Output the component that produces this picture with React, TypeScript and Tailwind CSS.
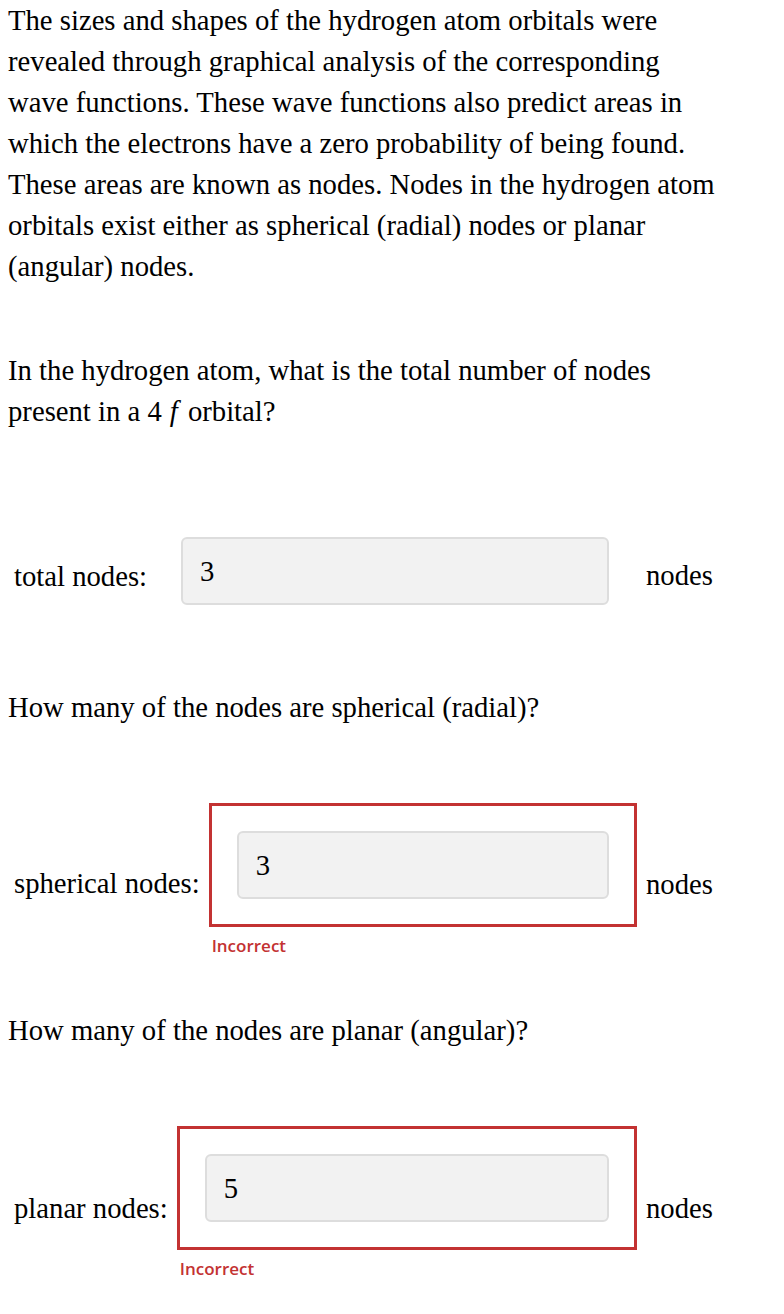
import React from "react";

function Field({
  label,
  value,
  labelGap,
  labelTop,
  unitTop,
  incorrect,
}: {
  label: string;
  value: string;
  labelGap: string;
  labelTop: string;
  unitTop: string;
  incorrect: boolean;
}) {
  return (
    <div className="flex items-start pl-[6px]">
      <div className="flex w-[623px] items-start">
        <span className={`whitespace-nowrap ${labelTop}`}>{label}</span>
        <div className={`flex-1 ${labelGap}`}>
          <div
            className={`border-[3px] p-[25px] ${
              incorrect ? "border-[#c33232]" : "border-transparent"
            }`}
          >
            <input
              readOnly
              value={value}
              className="block h-[68px] w-full rounded-[6px] border-2 border-[#dddddd] bg-[#f2f2f2] px-[17px] text-black outline-none"
            />
          </div>
          {incorrect && (
            <div
              className="mt-[8px] pl-[3px] text-[17px] font-semibold leading-[22px] text-[#c33232]"
              style={{ fontFamily: '"Open Sans", "Noto Sans", sans-serif' }}
            >
              Incorrect
            </div>
          )}
        </div>
      </div>
      <span className={`ml-[9px] whitespace-nowrap ${unitTop}`}>nodes</span>
    </div>
  );
}

export default function App() {
  return (
    <div
      className="bg-white pl-2 text-[28.7px] leading-[41px] text-black"
      style={{ fontFamily: '"Liberation Serif", "Times New Roman", serif' }}
    >
      <p className="w-[715px]">
        The sizes and shapes of the hydrogen atom orbitals were revealed through
        graphical analysis of the corresponding wave functions. These wave
        functions also predict areas in which the electrons have a zero
        probability of being found. These areas are known as nodes. Nodes in the
        hydrogen atom orbitals exist either as spherical (radial) nodes or planar
        (angular) nodes.
      </p>
      <p className="mt-[63px] w-[715px]">
        In the hydrogen atom, what is the total number of nodes present in a 4
        <i className="inline-block pl-[8px] pr-[3px]">f</i> orbital?
      </p>
      <div className="mt-[77px]">
        <Field
          label="total nodes:"
          value="3"
          labelGap="ml-[6px]"
          labelTop="mt-[47px]"
          unitTop="mt-[46px]"
          incorrect={false}
        />
      </div>
      <p className="mt-[54px] w-[715px]">
        How many of the nodes are spherical (radial)?
      </p>
      <div className="mt-[75px]">
        <Field
          label="spherical nodes:"
          value="3"
          labelGap="ml-[9px]"
          labelTop="mt-[60px]"
          unitTop="mt-[61px]"
          incorrect={true}
        />
      </div>
      <p className="mt-[53px] w-[715px]">
        How many of the nodes are planar (angular)?
      </p>
      <div className="mt-[75px] pb-[30px]">
        <Field
          label="planar nodes:"
          value="5"
          labelGap="ml-[9px]"
          labelTop="mt-[62px]"
          unitTop="mt-[62px]"
          incorrect={true}
        />
      </div>
    </div>
  );
}
